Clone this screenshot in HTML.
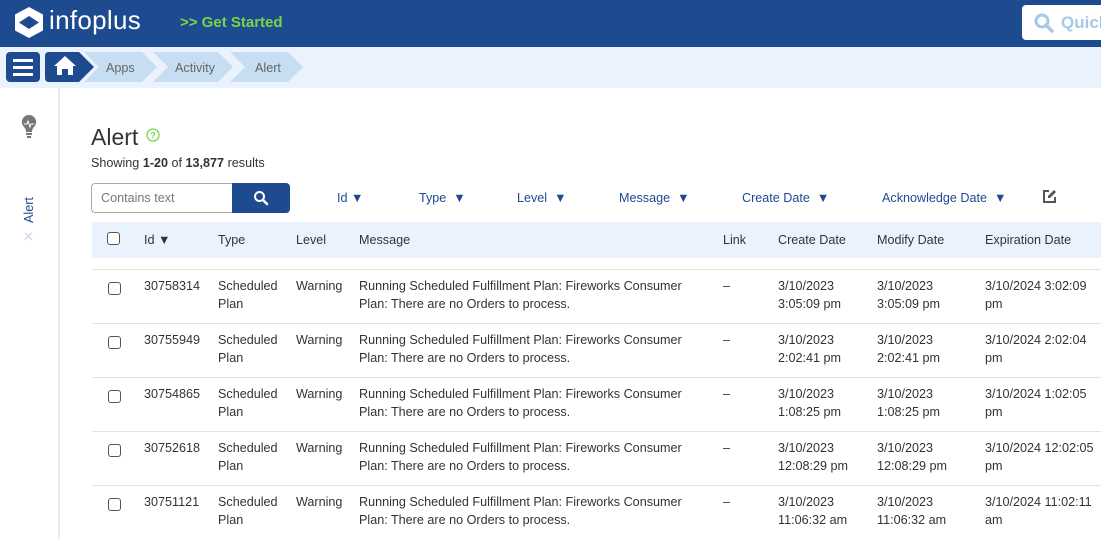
<!DOCTYPE html>
<html><head><meta charset="utf-8"><style>
*{margin:0;padding:0;box-sizing:border-box}
body{width:1101px;height:539px;overflow:hidden;background:#fff;font-family:"Liberation Sans",Arial,sans-serif;position:relative;color:#333}
.a{position:absolute;white-space:nowrap}
.top{position:absolute;left:0;top:0;width:1101px;height:47px;background:#1e4a90}
.crumb{position:absolute;left:0;top:47px;width:1101px;height:41px;background:#eaf3fd}
.side{position:absolute;left:58px;top:88px;width:2px;height:451px;background:#e3eefb}
.hdr{position:absolute;left:92px;top:222px;width:1009px;height:36px;background:#eaf3fd}
.line{position:absolute;left:92px;width:1009px;height:1px;background:#e2e2e2}
.cb{position:absolute;width:13px;height:13px;border:1px solid #555;border-radius:3px;background:#fff}
.f{color:#1e4a90;font-size:12.6px}
.t{font-size:12.6px;color:#333;line-height:18px}
</style></head><body>
<div class="top"></div>
<svg class="a" style="left:14px;top:7px" width="30" height="31" viewBox="0 0 30 31"><polygon points="15,0 29,7.5 29,23.5 15,31 1,23.5 1,7.5" fill="#fff"/><polygon points="15,9 25,15.5 15,22 5,15.5" fill="#1e4a90"/></svg>
<div class="a" style="left:49px;top:5px;font-size:26px;color:#fff;letter-spacing:0.3px">infoplus</div>
<div class="a" style="left:180px;top:14px;font-size:15px;color:#7cd34a;font-weight:bold">&gt;&gt; Get Started</div>
<div class="a" style="left:1022px;top:5px;width:90px;height:35px;background:#fff;border-radius:4px"></div>
<svg class="a" style="left:1034px;top:13px" width="20" height="20" viewBox="0 0 20 20"><circle cx="8" cy="8" r="6" fill="none" stroke="#a6c8e8" stroke-width="3"/><line x1="12" y1="12" x2="18" y2="18" stroke="#a6c8e8" stroke-width="3.5" stroke-linecap="round"/></svg>
<div class="a" style="left:1061px;top:13px;font-size:17px;color:#a6c8e8;font-weight:bold">Quick</div>
<div class="crumb"></div>
<svg class="a" style="left:0;top:47px" width="310" height="41" viewBox="0 0 310 41">
<rect x="6" y="5" width="34" height="30" rx="4" fill="#1e4a90"/>
<rect x="13" y="12" width="20" height="3" fill="#fff"/><rect x="13" y="19" width="20" height="3" fill="#fff"/><rect x="13" y="26" width="20" height="3" fill="#fff"/>
<polygon points="303,20 288,5 230,5 245,20 230,35 288,35" fill="#c7ddf2"/>
<polygon points="233,20 218,5 153,5 168,20 153,35 218,35" fill="#c7ddf2"/>
<polygon points="157,20 142,5 84,5 99,20 84,35 142,35" fill="#c7ddf2"/>
<path d="M49,5 H79 L94,20 L79,35 H49 Q45,35 45,31 V9 Q45,5 49,5Z" fill="#1e4a90"/>
<polygon points="65,9 54,19 57,19 57,28 62,28 62,22 68,22 68,28 73,28 73,19 76,19" fill="#fff"/>
</svg>
<div class="a" style="left:106px;top:61px;font-size:12.6px;color:#666">Apps</div>
<div class="a" style="left:175px;top:61px;font-size:12.6px;color:#666">Activity</div>
<div class="a" style="left:255px;top:61px;font-size:12.6px;color:#666">Alert</div>
<div class="side"></div>
<svg class="a" style="left:21px;top:114px" width="16" height="26" viewBox="0 0 16 26"><path d="M8,1 A7,7 0 0 1 13,13 Q11,15 11,18 H5 Q5,15 3,13 A7,7 0 0 1 8,1Z" fill="#777"/><path d="M3,10 H6 L7,7 L9,13 L10,10 H13" fill="none" stroke="#fff" stroke-width="1"/><rect x="5" y="19" width="6" height="2" fill="#777"/><rect x="6" y="22" width="4" height="2" fill="#777"/></svg>
<div class="a" style="left:22px;top:223px;font-size:12.6px;color:#1e4a90;transform:rotate(-90deg);transform-origin:left top">Alert</div>
<div class="a" style="left:23px;top:229px;font-size:13px;color:#c7d7ea">✕</div>
<div class="a" style="left:91px;top:124px;font-size:23px;color:#333">Alert</div>
<svg class="a" style="left:146px;top:128px" width="14" height="14" viewBox="0 0 14 14"><circle cx="7" cy="7" r="6" fill="none" stroke="#7cd34a" stroke-width="1.3"/><text x="7" y="10.5" font-size="9" font-family="Liberation Sans" text-anchor="middle" fill="#7cd34a" font-weight="bold">?</text></svg>
<div class="a" style="left:91px;top:156px;font-size:12.6px">Showing <b>1-20</b> of <b>13,877</b> results</div>
<div class="a" style="left:91px;top:183px;width:143px;height:30px;border:1px solid #aaa;border-radius:4px 0 0 4px"></div>
<div class="a" style="left:101px;top:191px;font-size:12.6px;color:#777">Contains text</div>
<div class="a" style="left:232px;top:183px;width:58px;height:30px;background:#1e4a90;border-radius:0 4px 4px 0"></div>
<svg class="a" style="left:253px;top:190px" width="16" height="16" viewBox="0 0 16 16"><circle cx="6.5" cy="6.5" r="4.5" fill="none" stroke="#fff" stroke-width="2"/><line x1="10" y1="10" x2="14" y2="14" stroke="#fff" stroke-width="2.5" stroke-linecap="round"/></svg>
<div class="a f" style="left:337px;top:191px">Id ▼</div>
<div class="a f" style="left:419px;top:191px">Type &nbsp;▼</div>
<div class="a f" style="left:517px;top:191px">Level &nbsp;▼</div>
<div class="a f" style="left:619px;top:191px">Message &nbsp;▼</div>
<div class="a f" style="left:742px;top:191px">Create Date &nbsp;▼</div>
<div class="a f" style="left:882px;top:191px">Acknowledge Date &nbsp;▼</div>
<svg class="a" style="left:1042px;top:189px" width="15" height="15" viewBox="0 0 15 15"><path d="M7,2 H2 V13 H13 V8" fill="none" stroke="#555" stroke-width="2"/><path d="M6,9 L6,7 L12,1 L14,3 L8,9Z" fill="#555"/></svg>
<div class="hdr"></div>
<div class="cb" style="left:107px;top:232px"></div>
<div class="a t" style="left:144px;top:231px">Id ▼</div>
<div class="a t" style="left:218px;top:231px">Type</div>
<div class="a t" style="left:296px;top:231px">Level</div>
<div class="a t" style="left:359px;top:231px">Message</div>
<div class="a t" style="left:723px;top:231px">Link</div>
<div class="a t" style="left:778px;top:231px">Create Date</div>
<div class="a t" style="left:877px;top:231px">Modify Date</div>
<div class="a t" style="left:985px;top:231px">Expiration Date</div>
<div id="rows"></div>
<script>
var d=[["30758314","3:05:09 pm","3/10/2024 3:02:09","pm"],["30755949","2:02:41 pm","3/10/2024 2:02:04","pm"],["30754865","1:08:25 pm","3/10/2024 1:02:05","pm"],["30752618","12:08:29 pm","3/10/2024 12:02:05","pm"],["30751121","11:06:32 am","3/10/2024 11:02:11","am"]];
var h="";d.forEach(function(r,i){var y=269+i*54;
h+='<div class="line" style="top:'+y+'px"></div>';
var ty=y+8;
h+='<div class="cb" style="left:108px;top:'+(y+13)+'px"></div>';
h+='<div class="a t" style="left:144px;top:'+ty+'px">'+r[0]+'</div>';
h+='<div class="a t" style="left:218px;top:'+ty+'px">Scheduled<br>Plan</div>';
h+='<div class="a t" style="left:296px;top:'+ty+'px">Warning</div>';
h+='<div class="a t" style="left:359px;top:'+ty+'px">Running Scheduled Fulfillment Plan: Fireworks Consumer<br>Plan: There are no Orders to process.</div>';
h+='<div class="a t" style="left:723px;top:'+ty+'px">–</div>';
h+='<div class="a t" style="left:778px;top:'+ty+'px">3/10/2023<br>'+r[1]+'</div>';
h+='<div class="a t" style="left:877px;top:'+ty+'px">3/10/2023<br>'+r[1]+'</div>';
h+='<div class="a t" style="left:985px;top:'+ty+'px">'+r[2]+'<br>'+r[3]+'</div>';});
document.getElementById("rows").innerHTML=h;
</script>
</body></html>
